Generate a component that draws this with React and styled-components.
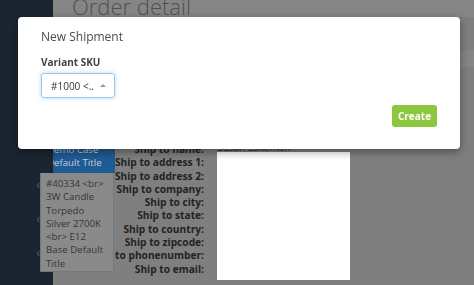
import React from 'react';
import styled, { createGlobalStyle } from 'styled-components';

const GlobalStyle = createGlobalStyle`
  html, body {
    margin: 0;
    padding: 0;
    width: 474px;
    height: 285px;
    overflow: hidden;
    font-family: "Open Sans", "Liberation Sans", sans-serif;
  }
`;

const labels = [
  'Ship to name:',
  'Ship to address 1:',
  'Ship to address 2:',
  'Ship to company:',
  'Ship to city:',
  'Ship to state:',
  'Ship to country:',
  'Ship to zipcode:',
  'Ship to phonenumber:',
  'Ship to email:',
];

const optionLines = ['#40334 <br>', '3W Candle', 'Torpedo', 'Silver 2700K', '<br> E12', 'Base Default', 'Title'];

const App = () => {
  return (
    <>
      <GlobalStyle />
      <Page>
        <Sidebar>
          <NavList>
            <NavItem>‹</NavItem>
            <NavItem>‹</NavItem>
            <NavItem>‹</NavItem>
          </NavList>
        </Sidebar>
        <Main>
          <Header>
            <Title>Order detail</Title>
          </Header>
          <Band />
          <Details>
            <Labels>
              {labels.map((l) => (
                <Label key={l}>{l}</Label>
              ))}
            </Labels>
            <Values>
              <Name>Susan Lakeman</Name>
              <Frame />
            </Values>
          </Details>
        </Main>
      </Page>

      <Overlay />

      <SkuList>
        <Highlight>
          <span>Demo Case</span>
          <span>Default Title</span>
        </Highlight>
        <Options>
          {optionLines.map((l) => (
            <span key={l}>{l}</span>
          ))}
        </Options>
      </SkuList>

      <Modal>
        <ModalTitle>New Shipment</ModalTitle>
        <FieldLabel>Variant SKU</FieldLabel>
        <Select>
          <span>#1000 &lt;..</span>
          <Caret />
        </Select>
        <Footer>
          <CreateButton>Create</CreateButton>
        </Footer>
      </Modal>
    </>
  );
};

export default App;

const Page = styled.div`
  display: flex;
  width: 474px;
  height: 285px;
`;

const Sidebar = styled.div`
  width: 53px;
  flex-shrink: 0;
  background: #34485e;
`;

const NavList = styled.div`
  display: flex;
  flex-direction: column;
  padding-top: 168px;
`;

const NavItem = styled.div`
  height: 34px;
  text-align: right;
  padding-right: 13px;
  font-size: 12px;
  line-height: 34px;
  color: #a7b1c2;
`;

const Main = styled.div`
  flex: 1;
  display: flex;
  flex-direction: column;
  background: #f3f3f4;
`;

const Header = styled.div`
  height: 17px;
  background: #fff;
  padding-left: 19px;
  overflow: hidden;
`;

const Title = styled.h2`
  margin: -5px 0 0;
  font-size: 22px;
  line-height: 22px;
  font-weight: 300;
  color: #9a9a9a;
  white-space: nowrap;
`;

const Band = styled.div`
  height: 17px;
  margin-top: 33px;
  background: #fff;
`;

const Details = styled.div`
  display: grid;
  grid-template-columns: 151px 133px;
  column-gap: 13px;
  padding-top: 76px;
`;

const Labels = styled.div`
  display: flex;
  flex-direction: column;
  align-items: flex-end;
`;

const Label = styled.div`
  font-size: 10.2px;
  line-height: 13.3px;
  font-weight: 700;
  color: #444;
  white-space: nowrap;
`;

const Values = styled.div`
  display: flex;
  flex-direction: column;
`;

const Name = styled.div`
  font-size: 10px;
  line-height: 9px;
  height: 9px;
  color: #555;
  overflow: hidden;
`;

const Frame = styled.div`
  position: relative;
  z-index: 15;
  height: 128px;
  background: #fff;
`;

const Overlay = styled.div`
  position: fixed;
  inset: 0;
  background: rgba(0, 0, 0, 0.48);
  z-index: 10;
`;

const SkuList = styled.div`
  position: fixed;
  left: 40px;
  top: 120px;
  width: 75px;
  z-index: 15;
  display: flex;
  flex-direction: column;
  font-size: 9.7px;
  line-height: 13.3px;
`;

const Highlight = styled.div`
  margin-left: 13px;
  height: 53px;
  box-sizing: border-box;
  padding-top: 23px;
  background: #1f5b93;
  color: #c4cfdb;
  overflow: hidden;
  display: flex;
  flex-direction: column;
  white-space: nowrap;

  span {
    margin-left: -6px;
  }
`;

const Options = styled.div`
  width: 74px;
  box-sizing: border-box;
  height: 99px;
  padding: 4px 0 0 5px;
  background: #8a8a8a;
  border: 1px solid #6a7a8b;
  border-top: none;
  color: #363636;
  display: flex;
  flex-direction: column;
  white-space: nowrap;
`;

const Modal = styled.div`
  position: fixed;
  left: 18px;
  top: 17px;
  width: 442px;
  box-sizing: border-box;
  padding: 12px 23px 22px;
  background: #fff;
  border-radius: 4px;
  box-shadow: 0 3px 9px rgba(0, 0, 0, 0.4);
  z-index: 20;
  display: flex;
  flex-direction: column;
`;

const ModalTitle = styled.div`
  font-size: 12px;
  line-height: 16px;
  color: #4a4a4a;
`;

const FieldLabel = styled.div`
  margin-top: 10px;
  font-size: 10px;
  line-height: 14px;
  font-weight: 700;
  color: #444;
`;

const Select = styled.div`
  margin-top: 4px;
  width: 74px;
  height: 25px;
  box-sizing: border-box;
  border: 1px solid #9cc6ee;
  border-radius: 3px;
  box-shadow: 0 0 4px rgba(102, 175, 233, 0.5);
  display: flex;
  align-items: center;
  justify-content: space-between;
  padding: 0 8px 0 9px;
  font-size: 10px;
  color: #333;
`;

const Caret = styled.span`
  width: 0;
  height: 0;
  border-left: 3px solid transparent;
  border-right: 3px solid transparent;
  border-bottom: 3px solid #999;
`;

const Footer = styled.div`
  display: flex;
  justify-content: flex-end;
  margin-top: 7px;
`;

const CreateButton = styled.button`
  width: 45px;
  height: 22px;
  padding: 0;
  border: none;
  border-radius: 3px;
  background: #8dc63f;
  color: #fff;
  font-family: "Open Sans", "Liberation Sans", sans-serif;
  font-size: 10px;
  font-weight: 700;
`;
